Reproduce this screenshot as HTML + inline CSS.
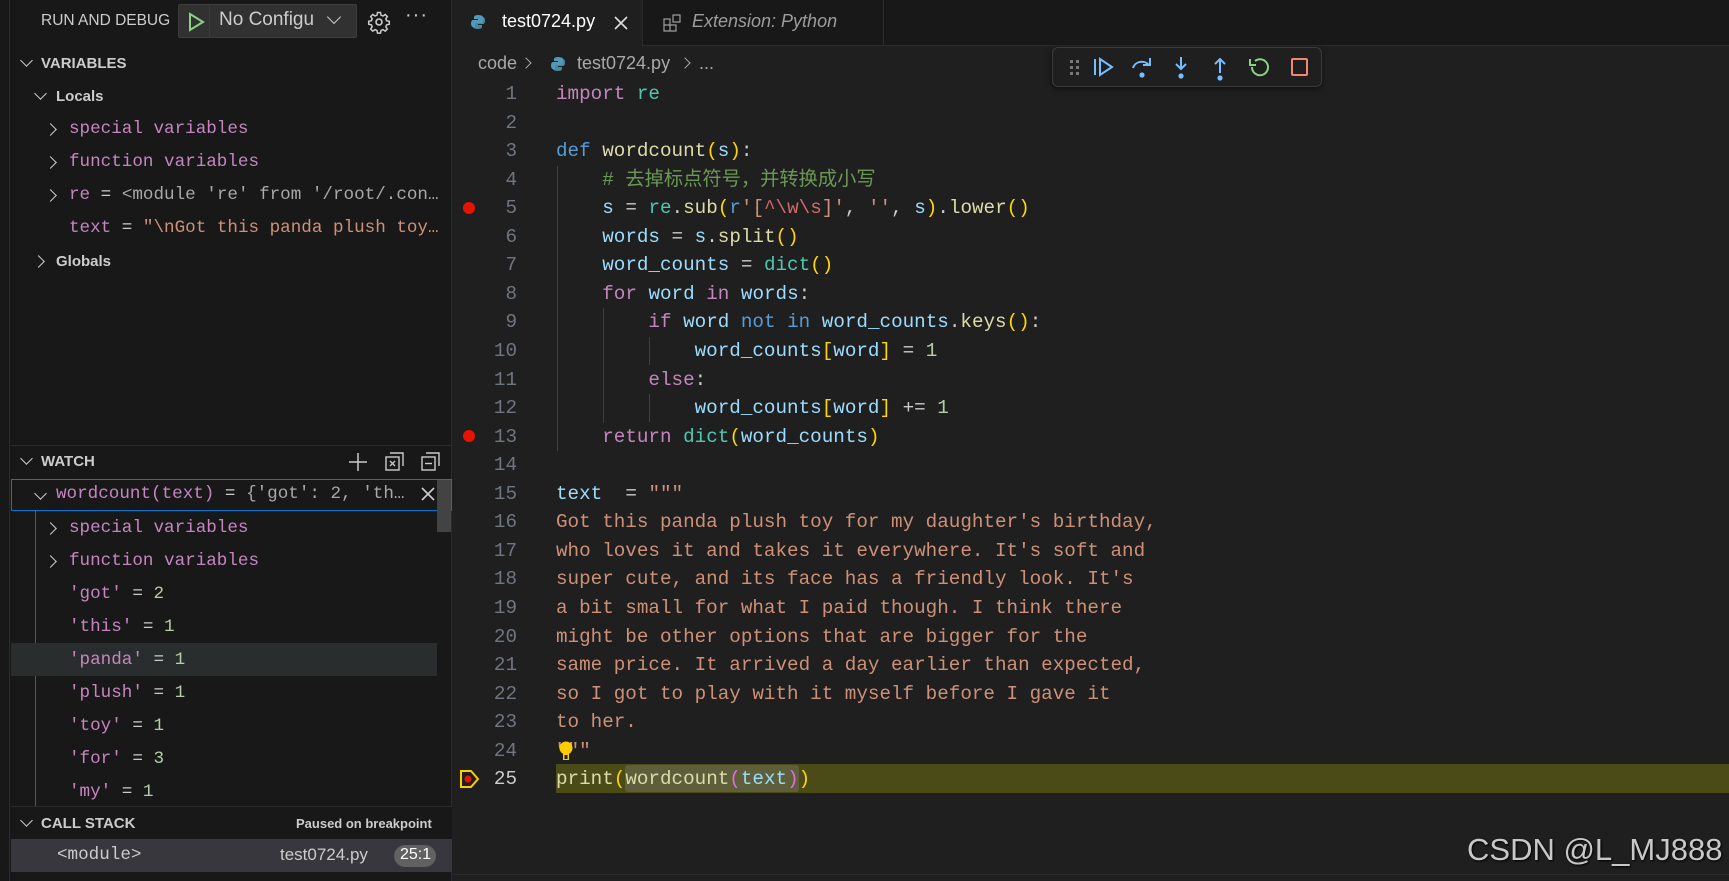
<!DOCTYPE html>
<html><head><meta charset="utf-8"><style>
*{margin:0;padding:0;box-sizing:border-box}
body{width:1729px;height:881px;background:#1f1f1f;position:relative;overflow:hidden;font-family:"Liberation Sans","Noto Sans CJK SC",sans-serif;color:#cccccc}
.a{position:absolute;white-space:pre}
.m{font-family:"Liberation Mono","Noto Sans CJK SC",monospace}
#side{position:absolute;left:0;top:0;width:452px;height:881px;background:#181818;border-right:1px solid #2b2b2b}
.sm{font-size:17.6px;line-height:33px;height:33px}
.ch{position:absolute;width:9px;height:9px;border-right:1.6px solid #cccccc;border-bottom:1.6px solid #cccccc}
.dn{transform:rotate(45deg)}
.rt{transform:rotate(-45deg)}
.hd{font-size:15px;font-weight:bold;color:#cccccc}
.n{color:#c586c0}.s{color:#ce9178}.num{color:#b5cea8}.g{color:#a8a8a8}
.code{font-family:"Liberation Mono","Noto Sans CJK SC",monospace;font-size:19.25px;line-height:28.55px;height:28.55px;color:#cccccc;left:556px}
.code.s{color:#ce9178}
.ln{font-family:"Liberation Mono",monospace;font-size:19.25px;line-height:28.55px;color:#6e7681;width:60px;text-align:right;left:457px}
.k{color:#c586c0}.b{color:#569cd6}.f{color:#dcdcaa}.v{color:#9cdcfe}.t{color:#4ec9b0}.c{color:#6a9955}.y{color:#ffd700}.p{color:#da70d6}.bl{color:#179fff}.r{color:#d16969}
.gd{position:absolute;width:1px;background:#404040}
</style></head><body>

<!-- SIDEBAR -->
<div id="side">
<div style="position:absolute;left:0;top:0;width:10px;height:881px;background:#181818;border-right:1px solid #2b2b2b"></div>
<div class="a" style="left:41px;top:12px;font-size:15.5px;color:#cccccc">RUN AND DEBUG</div>
<div style="position:absolute;left:178px;top:4px;width:179px;height:34px;background:#313131;border:1px solid #3c3c3c;border-radius:2px"></div>
<svg class="a" style="left:186px;top:11px" width="20" height="22"><path d="M4 3 L17 11 L4 19 Z" fill="none" stroke="#89d185" stroke-width="2"/></svg>
<div style="position:absolute;left:209px;top:5px;width:1px;height:32px;background:#3c3c3c"></div>
<div class="a" style="left:219px;top:9px;font-size:19px;color:#cccccc;width:104px;overflow:hidden">No Configu</div>
<div class="ch dn" style="left:329px;top:12px;width:10px;height:10px"></div>
<svg class="a" style="left:367px;top:10px" width="24" height="24" viewBox="0 0 24 24"><circle cx="12" cy="12" r="3" fill="none" stroke="#ccc" stroke-width="1.6"/><path d="M10.5 2.5h3l.5 2.6 2 .9 2.2-1.5 2.1 2.1-1.5 2.2.9 2 2.6.5v3l-2.6.5-.9 2 1.5 2.2-2.1 2.1-2.2-1.5-2 .9-.5 2.6h-3l-.5-2.6-2-.9-2.2 1.5-2.1-2.1 1.5-2.2-.9-2-2.6-.5v-3l2.6-.5.9-2-1.5-2.2 2.1-2.1 2.2 1.5 2-.9z" fill="none" stroke="#ccc" stroke-width="1.5"/></svg>
<div class="a" style="left:405px;top:4px;font-size:20px;color:#ccc;letter-spacing:1px">···</div>

<div class="ch dn" style="left:22px;top:56px"></div>
<div class="a hd" style="left:41px;top:55px">VARIABLES</div>
<div class="ch dn" style="left:36px;top:89px"></div>
<div class="a hd" style="left:56px;top:88px">Locals</div>
<div class="ch rt" style="left:46px;top:125px"></div>
<div class="a m sm" style="left:69px;top:113px"><span class="n">special variables</span></div>
<div class="ch rt" style="left:46px;top:158px"></div>
<div class="a m sm" style="left:69px;top:146px"><span class="n">function variables</span></div>
<div class="ch rt" style="left:46px;top:191px"></div>
<div class="a m sm" style="left:69px;top:179px"><span class="n">re</span> = <span class="g">&lt;module 're' from '/root/.con…</span></div>
<div class="a m sm" style="left:69px;top:212px"><span class="n">text</span> = <span class="s">"\nGot this panda plush toy…</span></div>
<div class="ch rt" style="left:34px;top:257px"></div>
<div class="a hd" style="left:56px;top:253px">Globals</div>

<div style="position:absolute;left:11px;top:445px;width:441px;height:1px;background:#2b2b2b"></div>
<div class="ch dn" style="left:22px;top:454px"></div>
<div class="a hd" style="left:41px;top:453px">WATCH</div>
<svg class="a" style="left:346px;top:450px" width="24" height="24"><path d="M12 3v18M3 12h18" stroke="#ccc" stroke-width="1.5"/></svg>
<svg class="a" style="left:384px;top:451px" width="22" height="22" viewBox="0 0 22 22"><rect x="2" y="6" width="13" height="13" fill="none" stroke="#ccc" stroke-width="1.4"/><path d="M6 2h13v13" fill="none" stroke="#ccc" stroke-width="1.4"/><path d="M6 10l5 5M11 10l-5 5" stroke="#ccc" stroke-width="1.3"/></svg>
<svg class="a" style="left:420px;top:451px" width="22" height="22" viewBox="0 0 22 22"><rect x="2" y="6" width="13" height="13" fill="none" stroke="#ccc" stroke-width="1.4"/><path d="M6 2h13v13" fill="none" stroke="#ccc" stroke-width="1.4"/><path d="M5 12.5h7" stroke="#ccc" stroke-width="1.4"/></svg>

<div style="position:absolute;left:11px;top:479px;width:441px;height:32px;border:1px solid #0078d4"></div>
<div style="position:absolute;left:437px;top:480px;width:14px;height:52px;background:#434343"></div>
<div class="ch dn" style="left:36px;top:489px"></div>
<div class="a m sm" style="left:56px;top:478px;width:370px;overflow:hidden"><span class="n">wordcount(text)</span> = <span class="g">{'got': 2, 'th…</span></div>
<svg class="a" style="left:420px;top:486px" width="16" height="16"><path d="M2 2l12 12M14 2L2 14" stroke="#ccc" stroke-width="1.6"/></svg>
<div style="position:absolute;left:35px;top:511px;width:1px;height:295px;background:#585858"></div>
<div style="position:absolute;left:11px;top:643px;width:426px;height:33px;background:#2a2d2e"></div>
<div class="ch rt" style="left:46px;top:524px"></div>
<div class="a m sm" style="left:69px;top:512px"><span class="n">special variables</span></div>
<div class="ch rt" style="left:46px;top:557px"></div>
<div class="a m sm" style="left:69px;top:545px"><span class="n">function variables</span></div>
<div class="a m sm" style="left:69px;top:578px"><span class="n">'got'</span> = <span class="num">2</span></div>
<div class="a m sm" style="left:69px;top:611px"><span class="n">'this'</span> = <span class="num">1</span></div>
<div class="a m sm" style="left:69px;top:644px"><span class="n">'panda'</span> = <span class="num">1</span></div>
<div class="a m sm" style="left:69px;top:677px"><span class="n">'plush'</span> = <span class="num">1</span></div>
<div class="a m sm" style="left:69px;top:710px"><span class="n">'toy'</span> = <span class="num">1</span></div>
<div class="a m sm" style="left:69px;top:743px"><span class="n">'for'</span> = <span class="num">3</span></div>
<div class="a m sm" style="left:69px;top:776px"><span class="n">'my'</span> = <span class="num">1</span></div>

<div style="position:absolute;left:11px;top:806px;width:441px;height:33px;background:#181818;border-top:1px solid #2b2b2b"></div>
<div class="ch dn" style="left:22px;top:816px"></div>
<div class="a hd" style="left:41px;top:815px">CALL STACK</div>
<div class="a" style="left:296px;top:816px;font-size:13px;font-weight:bold;color:#cccccc">Paused on breakpoint</div>
<div style="position:absolute;left:11px;top:839px;width:441px;height:33px;background:#37373d"></div>
<div class="a m sm" style="left:57px;top:839px;color:#cccccc">&lt;module&gt;</div>
<div class="a" style="left:280px;top:845px;font-size:17px;color:#cccccc">test0724.py</div>
<div style="position:absolute;left:394px;top:845px;width:42px;height:22px;border-radius:11px;background:#616161"></div>
<div class="a" style="left:400px;top:846px;font-size:16px;color:#fff">25:1</div>
</div>

<!-- TABS -->
<div style="position:absolute;left:453px;top:0;width:1276px;height:46px;background:#181818;border-bottom:1px solid #2b2b2b"></div>
<div style="position:absolute;left:453px;top:0;width:190px;height:47px;background:#1f1f1f;border-right:1px solid #2b2b2b"></div>
<svg class="a" style="left:470px;top:14px" width="16" height="16" viewBox="0 0 16 16"><path d="M8 1C4 1 4 3 4 3v2h4v1H3S1 6 1 9.5 3 13 3 13h2v-2s0-2 2-2h4s2 0 2-2V3s0-2-5-2z" fill="#519aba"/><path d="M8 15c4 0 4-2 4-2v-2H8v-1h5s2 0 2-3.5S13 3 13 3h-2v2s0 2-2 2H5s-2 0-2 2v4s0 2 5 2z" fill="#519aba" opacity=".85"/></svg>
<div class="a" style="left:502px;top:11px;font-size:18px;color:#ffffff">test0724.py</div>
<svg class="a" style="left:613px;top:15px" width="16" height="16"><path d="M2 2l12 12M14 2L2 14" stroke="#ddd" stroke-width="1.6"/></svg>
<div style="position:absolute;left:883px;top:0;width:1px;height:46px;background:#2b2b2b"></div>
<svg class="a" style="left:662px;top:13px" width="20" height="20" viewBox="0 0 20 20"><path d="M2 6h6v6H2zM2 12h6v6H2zM8 12h6v6H8zM11 2h7v7h-7z" fill="none" stroke="#9d9d9d" stroke-width="1.2"/></svg>
<div class="a" style="left:692px;top:11px;font-size:18px;font-style:italic;color:#9d9d9d">Extension: Python</div>

<!-- breadcrumb -->
<div class="a" style="left:478px;top:53px;font-size:18px;color:#a9a9a9">code</div>
<div class="ch rt" style="left:522px;top:59px;width:8px;height:8px;border-color:#a9a9a9"></div>
<svg class="a" style="left:550px;top:56px" width="16" height="16" viewBox="0 0 16 16"><path d="M8 1C4 1 4 3 4 3v2h4v1H3S1 6 1 9.5 3 13 3 13h2v-2s0-2 2-2h4s2 0 2-2V3s0-2-5-2z" fill="#519aba"/><path d="M8 15c4 0 4-2 4-2v-2H8v-1h5s2 0 2-3.5S13 3 13 3h-2v2s0 2-2 2H5s-2 0-2 2v4s0 2 5 2z" fill="#519aba" opacity=".85"/></svg>
<div class="a" style="left:577px;top:53px;font-size:18px;color:#a9a9a9">test0724.py</div>
<div class="ch rt" style="left:681px;top:59px;width:8px;height:8px;border-color:#a9a9a9"></div>
<div class="a" style="left:699px;top:53px;font-size:18px;color:#a9a9a9">...</div>

<!-- debug toolbar -->
<div style="position:absolute;left:1052px;top:47px;width:270px;height:40px;background:#1f1f1f;border:1px solid #3a3a3a;border-radius:6px;box-shadow:0 2px 6px rgba(0,0,0,.5)"></div>
<svg class="a" style="left:1052px;top:47px" width="270" height="40">
<g fill="#777"><rect x="18" y="13" width="3" height="3"/><rect x="24" y="13" width="3" height="3"/><rect x="18" y="19" width="3" height="3"/><rect x="24" y="19" width="3" height="3"/><rect x="18" y="25" width="3" height="3"/><rect x="24" y="25" width="3" height="3"/></g>
<g stroke="#75beff" stroke-width="2" fill="none"><path d="M43 12v16"/><path d="M48 12l12 8-12 8z"/>
<path d="M81 21a9 8 0 0 1 16-3"/><path d="M98 11v7h-7"/>
<path d="M129 10v12M124 17l5 5 5-5"/><path d="M168 26V12M163 17l5-5 5 5"/></g>
<g fill="#75beff"><circle cx="90" cy="28" r="2.6"/><circle cx="129" cy="29" r="2.6"/><circle cx="168" cy="31" r="2.6"/></g>
<path d="M203 14a8 8 0 1 1-3 6" stroke="#89d185" stroke-width="2" fill="none"/><path d="M198 12v6h6" stroke="#89d185" stroke-width="2" fill="none"/>
<rect x="240" y="12" width="15" height="16" stroke="#f48771" stroke-width="2" fill="none" rx="1"/>
</svg>

<!-- current line highlight -->
<div style="position:absolute;left:556px;top:764px;width:1173px;height:29px;background:#4b4b18"></div>
<div style="position:absolute;left:625px;top:765px;width:174px;height:27px;background:#5e5e3a;border-radius:3px"></div>

<!-- indent guides -->
<div class="gd" style="left:557px;top:166px;height:285px"></div>
<div class="gd" style="left:603px;top:308px;height:115px"></div>
<div class="gd" style="left:649px;top:337px;height:28px"></div>
<div class="gd" style="left:649px;top:394px;height:28px"></div>

<!-- breakpoints -->
<div style="position:absolute;left:463px;top:202px;width:12px;height:12px;border-radius:6px;background:#e51400"></div>
<div style="position:absolute;left:463px;top:430px;width:12px;height:12px;border-radius:6px;background:#e51400"></div>
<svg class="a" style="left:459px;top:768px" width="22" height="22"><path d="M2 3h10l7 8-7 8H2z" fill="none" stroke="#ffcc00" stroke-width="2"/><circle cx="9" cy="11" r="3.5" fill="#e51400"/></svg>

<!-- line numbers -->
<div class="a ln" style="top:80px">1</div>
<div class="a ln" style="top:108.5px">2</div>
<div class="a ln" style="top:137.1px">3</div>
<div class="a ln" style="top:165.6px">4</div>
<div class="a ln" style="top:194.2px">5</div>
<div class="a ln" style="top:222.7px">6</div>
<div class="a ln" style="top:251.3px">7</div>
<div class="a ln" style="top:279.8px">8</div>
<div class="a ln" style="top:308.4px">9</div>
<div class="a ln" style="top:337px">10</div>
<div class="a ln" style="top:365.5px">11</div>
<div class="a ln" style="top:394px">12</div>
<div class="a ln" style="top:422.6px">13</div>
<div class="a ln" style="top:451.2px">14</div>
<div class="a ln" style="top:479.7px">15</div>
<div class="a ln" style="top:508.3px">16</div>
<div class="a ln" style="top:536.8px">17</div>
<div class="a ln" style="top:565.4px">18</div>
<div class="a ln" style="top:593.9px">19</div>
<div class="a ln" style="top:622.5px">20</div>
<div class="a ln" style="top:651px">21</div>
<div class="a ln" style="top:679.6px">22</div>
<div class="a ln" style="top:708.1px">23</div>
<div class="a ln" style="top:736.7px">24</div>
<div class="a ln" style="top:765.2px;color:#cccccc">25</div>

<!-- code -->
<div class="a code" style="top:80px"><span class="k">import</span> <span class="t">re</span></div>
<div class="a code" style="top:137.1px"><span class="b">def</span> <span class="f">wordcount</span><span class="y">(</span><span class="v">s</span><span class="y">)</span>:</div>
<div class="a code" style="top:165.6px">    <span class="c"># 去掉标点符号，并转换成小写</span></div>
<div class="a code" style="top:194.2px">    <span class="v">s</span> = <span class="t">re</span>.<span class="f">sub</span><span class="y">(</span><span class="b">r</span><span class="s">'[</span><span class="r">^\w\s</span><span class="s">]'</span>, <span class="s">''</span>, <span class="v">s</span><span class="y">)</span>.<span class="f">lower</span><span class="y">()</span></div>
<div class="a code" style="top:222.7px">    <span class="v">words</span> = <span class="v">s</span>.<span class="f">split</span><span class="y">()</span></div>
<div class="a code" style="top:251.3px">    <span class="v">word_counts</span> = <span class="t">dict</span><span class="y">()</span></div>
<div class="a code" style="top:279.8px">    <span class="k">for</span> <span class="v">word</span> <span class="k">in</span> <span class="v">words</span>:</div>
<div class="a code" style="top:308.4px">        <span class="k">if</span> <span class="v">word</span> <span class="b">not</span> <span class="b">in</span> <span class="v">word_counts</span>.<span class="f">keys</span><span class="y">()</span>:</div>
<div class="a code" style="top:337px">            <span class="v">word_counts</span><span class="y">[</span><span class="v">word</span><span class="y">]</span> = <span class="num">1</span></div>
<div class="a code" style="top:365.5px">        <span class="k">else</span>:</div>
<div class="a code" style="top:394px">            <span class="v">word_counts</span><span class="y">[</span><span class="v">word</span><span class="y">]</span> += <span class="num">1</span></div>
<div class="a code" style="top:422.6px">    <span class="k">return</span> <span class="t">dict</span><span class="y">(</span><span class="v">word_counts</span><span class="y">)</span></div>
<div class="a code" style="top:479.7px"><span class="v">text</span>  = <span class="s">"""</span></div>
<div class="a code s" style="top:508.3px">Got this panda plush toy for my daughter's birthday,</div>
<div class="a code s" style="top:536.8px">who loves it and takes it everywhere. It's soft and</div>
<div class="a code s" style="top:565.4px">super cute, and its face has a friendly look. It's</div>
<div class="a code s" style="top:593.9px">a bit small for what I paid though. I think there</div>
<div class="a code s" style="top:622.5px">might be other options that are bigger for the</div>
<div class="a code s" style="top:651px">same price. It arrived a day earlier than expected,</div>
<div class="a code s" style="top:679.6px">so I got to play with it myself before I gave it</div>
<div class="a code s" style="top:708.1px">to her.</div>
<div class="a code s" style="top:736.7px">"""</div>
<svg class="a" style="left:557px;top:740px" width="18" height="22"><circle cx="9" cy="8" r="6.5" fill="#ffcc00"/><rect x="6" y="13" width="6" height="7" fill="#ffcc00"/><rect x="7.5" y="15" width="3" height="4" fill="#1f1f1f"/></svg>
<div class="a code" style="top:765.2px"><span class="f">print</span><span class="y">(</span><span class="f">wordcount</span><span class="p">(</span><span class="v">text</span><span class="p">)</span><span class="y">)</span></div>

<div style="position:absolute;left:453px;top:874px;width:1276px;height:1px;background:#2b2b2b"></div>
<div class="a" style="left:1467px;top:832px;font-size:31px;color:#c8c8c8;text-shadow:1px 1px 2px #000">CSDN @L_MJ888</div>
</body></html>
